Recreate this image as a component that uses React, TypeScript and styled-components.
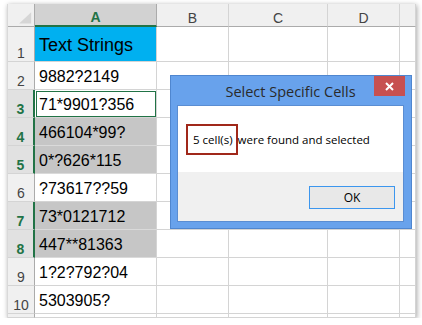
import styled, { createGlobalStyle, css } from "styled-components";

const GlobalStyle = createGlobalStyle`
  html, body {
    margin: 0;
    padding: 0;
    background: #ffffff;
  }
  body {
    font-family: "Liberation Sans", Arial, sans-serif;
  }
`;

interface RowData {
  n: number;
  value: string;
  title?: boolean;
  selected?: boolean;
  active?: boolean;
}

const rows: RowData[] = [
  { n: 1, value: "Text Strings", title: true },
  { n: 2, value: "9882?2149" },
  { n: 3, value: "71*9901?356", selected: true, active: true },
  { n: 4, value: "466104*99?", selected: true },
  { n: 5, value: "0*?626*115", selected: true },
  { n: 6, value: "?73617??59" },
  { n: 7, value: "73*0121712", selected: true },
  { n: 8, value: "447**81363", selected: true },
  { n: 9, value: "1?2?792?04" },
  { n: 10, value: "5303905?" },
];

const columns = ["A", "B", "C", "D", ""];
const GREEN = "#217346";

const App = () => (
  <>
    <GlobalStyle />
    <Page>
      <Sheet>
        <Grid>
          <Corner>
            <svg width="28" height="23" viewBox="0 0 28 23">
              <polygon points="25,8 25,20 12,20" fill="#d6d6d6" />
            </svg>
          </Corner>
          {columns.map((c, i) => (
            <ColHeader key={i} $selected={c === "A"}>
              {c}
            </ColHeader>
          ))}

          {rows.map((r) => (
            <Row key={r.n} r={r} />
          ))}

          <RowHeader $selected={false} />
          {columns.map((_, i) => (
            <Cell key={i} />
          ))}
        </Grid>

        <Dialog>
          <TitleBar>
            <Title>Select Specific Cells</Title>
            <CloseButton>
              <svg width="9" height="9" viewBox="0 0 9 9">
                <path d="M1 1 L8 8 M8 1 L1 8" stroke="#fff" strokeWidth="2" />
              </svg>
            </CloseButton>
          </TitleBar>
          <Body>
            <Message>
              <Marked>5 cell(s)</Marked>were found and selected
            </Message>
          </Body>
          <Footer>
            <OkButton>OK</OkButton>
          </Footer>
        </Dialog>
      </Sheet>
    </Page>
  </>
);

const Row = ({ r }: { r: RowData }) => (
  <>
    <RowHeader $selected={!!r.selected}>{r.n}</RowHeader>
    <ValueCell $title={!!r.title} $shaded={!!r.selected && !r.active} $active={!!r.active}>
      {r.value}
    </ValueCell>
    <Cell />
    <Cell />
    <Cell />
    <Cell />
  </>
);

export default App;

const Page = styled.div`
  padding: 4px 0 0 7px;
`;

const Sheet = styled.div`
  position: relative;
  width: 409px;
  height: 314px;
  box-shadow: 1px 1px 5px rgba(0, 0, 0, 0.35);
  border-left: 1px solid #d9d9d9;
  box-sizing: border-box;
`;

const Grid = styled.div`
  display: grid;
  grid-template-columns: 27px 122px 72px 99px 72px 16px;
  grid-template-rows: 23px 35px repeat(9, 28px) 4px;
  overflow: hidden;
  height: 314px;
`;

const Corner = styled.div`
  background: #f0f0f0;
  border-right: 1px solid #ababab;
  border-bottom: 1px solid #ababab;
  box-sizing: border-box;
  display: flex;
  svg {
    display: block;
  }
`;

const ColHeader = styled.div<{ $selected: boolean }>`
  box-sizing: border-box;
  display: flex;
  align-items: flex-end;
  justify-content: center;
  font-size: 14px;
  color: #444;
  background: #f0f0f0;
  border-right: 1px solid #d4d4d4;
  border-bottom: 1px solid #ababab;
  ${({ $selected }) =>
    $selected &&
    css`
      background: #d2d2d2;
      color: ${GREEN};
      font-weight: bold;
      border-bottom: 2px solid ${GREEN};
      border-right-color: #ababab;
    `}
`;

const RowHeader = styled.div<{ $selected: boolean }>`
  box-sizing: border-box;
  display: flex;
  align-items: flex-end;
  justify-content: center;
  font-size: 14px;
  color: #444;
  background: #f0f0f0;
  border-right: 1px solid #ababab;
  border-bottom: 1px solid #d4d4d4;
  ${({ $selected }) =>
    $selected &&
    css`
      background: #e1e1e1;
      color: ${GREEN};
      font-weight: bold;
      border-right: 2px solid ${GREEN};
    `}
`;

const Cell = styled.div`
  box-sizing: border-box;
  border-right: 1px solid #d4d4d4;
  border-bottom: 1px solid #d4d4d4;
  background: #fff;
`;

const ValueCell = styled(Cell)<{ $title: boolean; $shaded: boolean; $active: boolean }>`
  display: flex;
  align-items: flex-end;
  padding: 0 0 3px 4px;
  font-size: 16px;
  color: #000;
  white-space: nowrap;
  ${({ $title }) =>
    $title &&
    css`
      background: #00b0f0;
      font-size: 18px;
      padding-bottom: 5px;
      border-bottom-color: #d4d4d4;
    `}
  ${({ $shaded }) =>
    $shaded &&
    css`
      background: #c6c6c6;
      border-bottom-color: #dadada;
    `}
  ${({ $active }) =>
    $active &&
    css`
      outline: 1px solid ${GREEN};
      outline-offset: -2px;
    `}
`;

const Dialog = styled.div`
  position: absolute;
  left: 162px;
  top: 71px;
  width: 242px;
  height: 154px;
  box-sizing: border-box;
  background: #68a2ec;
  border: 1px solid #4f86cf;
  display: flex;
  flex-direction: column;
  padding: 0 7px 6px 6px;
  font-family: "Open Sans", "Liberation Sans", sans-serif;
`;

const TitleBar = styled.div`
  position: relative;
  height: 29px;
  display: flex;
  align-items: center;
  justify-content: center;
  flex-shrink: 0;
`;

const Title = styled.span`
  font-size: 14.5px;
  color: #2a2a2a;
  margin-top: 1px;
`;

const CloseButton = styled.div`
  position: absolute;
  right: -1px;
  top: 0;
  width: 31px;
  height: 20px;
  background: #c75050;
  display: flex;
  align-items: center;
  justify-content: center;
`;

const Body = styled.div`
  height: 67px;
  background: #fff;
  border: 1px solid #5a8dd2;
  border-bottom: none;
  box-sizing: border-box;
  display: flex;
  align-items: center;
  padding-left: 8px;
`;

const Message = styled.div`
  font-size: 11.5px;
  color: #000;
  white-space: nowrap;
`;

const Marked = styled.span`
  display: inline-block;
  border: 2px solid #a0281a;
  padding: 6px 3px 6px 5px;
`;

const Footer = styled.div`
  flex: 1;
  background: #f0f0f0;
  border: 1px solid #5a8dd2;
  border-top: none;
  display: flex;
  justify-content: flex-end;
  align-items: flex-start;
  padding: 14px 8px 0 0;
`;

const OkButton = styled.div`
  width: 86px;
  height: 23px;
  box-sizing: border-box;
  border: 1px solid #3c96ee;
  background: #e8e8e8;
  display: flex;
  align-items: center;
  justify-content: center;
  font-size: 12px;
  color: #000;
`;
